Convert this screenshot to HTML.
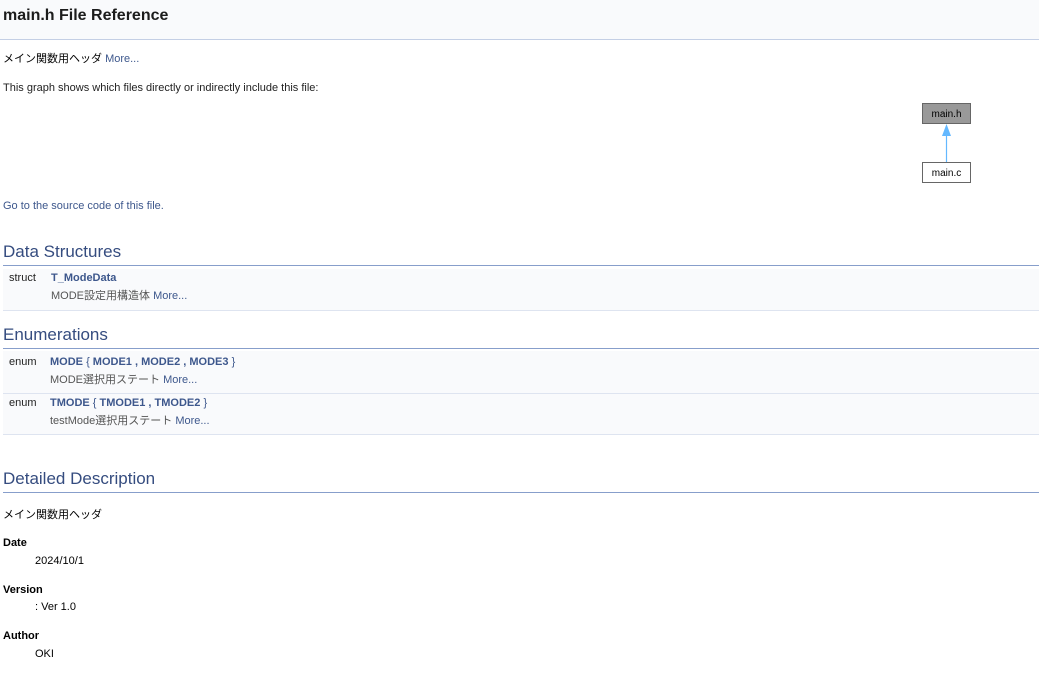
<!DOCTYPE html>
<html><head><meta charset="utf-8">
<style>
body{margin:0;width:1039px;height:690px;background:#fff;position:relative;overflow:hidden;font-family:"Liberation Sans","Noto Sans CJK JP",sans-serif;font-size:11px;color:#000;}
.a{position:absolute;white-space:nowrap;line-height:14px;}
.l{color:#3d578c;}
.b{font-weight:bold;}
.h2{position:absolute;left:3px;font-size:17px;color:#354c7f;line-height:20px;white-space:nowrap;}
.hl{position:absolute;left:3px;right:0;height:1px;background:#879ecb;}
.row{position:absolute;left:3px;right:0;background:#f9fafc;border-bottom:1px solid #dee4f0;}
</style></head><body>
<div style="position:absolute;left:0;top:0;width:1039px;height:39px;background:#f9fafc;border-bottom:1px solid #c4cfe5;"></div>
<div class="a b" style="left:3px;top:6px;font-size:16px;line-height:20px;color:#1c1c1c;">main.h File Reference</div>
<div class="a" style="left:3px;top:52px;">メイン関数用ヘッダ <span class="l">More...</span></div>
<div class="a" style="left:3px;top:81px;color:#222;">This graph shows which files directly or indirectly include this file:</div>
<svg style="position:absolute;left:0;top:0" width="1039" height="200">
<rect x="922.5" y="103.5" width="48" height="20" fill="#999" stroke="#666"/>
<text x="946.5" y="117" font-size="10" text-anchor="middle" font-family="Liberation Sans" fill="#000">main.h</text>
<rect x="922.5" y="162.5" width="48" height="20" fill="#fff" stroke="#666"/>
<text x="946.5" y="176" font-size="10" text-anchor="middle" font-family="Liberation Sans" fill="#000">main.c</text>
<line x1="946.5" y1="135" x2="946.5" y2="162" stroke="#63b8ff" stroke-width="1.2"/>
<polygon points="942,136 951,136 946.5,124" fill="#63b8ff"/>
</svg>
<div class="a l" style="left:3px;top:199px;">Go to the source code of this file.</div>

<div class="h2" style="top:242px;">Data Structures</div>
<div class="hl" style="top:265px;"></div>
<div class="row" style="top:269px;height:41px;"></div>
<div class="a" style="left:9px;top:271px;color:#222;">struct</div>
<div class="a b l" style="left:51px;top:271px;">T_ModeData</div>
<div class="a" style="left:51px;top:289px;color:#555;">MODE設定用構造体 <span class="l">More...</span></div>

<div class="h2" style="top:325px;">Enumerations</div>
<div class="hl" style="top:348px;"></div>
<div class="row" style="top:351px;height:42px;"></div>
<div class="row" style="top:394px;height:40px;"></div>
<div class="a" style="left:9px;top:355px;color:#222;">enum</div>
<div class="a b l" style="left:50px;top:355px;">MODE <span style="font-weight:normal">{</span> MODE1 , MODE2 , MODE3 <span style="font-weight:normal">}</span></div>
<div class="a" style="left:50px;top:373px;color:#555;">MODE選択用ステート <span class="l">More...</span></div>
<div class="a" style="left:9px;top:396px;color:#222;">enum</div>
<div class="a b l" style="left:50px;top:396px;">TMODE <span style="font-weight:normal">{</span> TMODE1 , TMODE2 <span style="font-weight:normal">}</span></div>
<div class="a" style="left:50px;top:414px;color:#555;">testMode選択用ステート <span class="l">More...</span></div>

<div class="h2" style="top:469px;">Detailed Description</div>
<div class="hl" style="top:492px;"></div>
<div class="a" style="left:3px;top:508px;">メイン関数用ヘッダ</div>
<div class="a b" style="left:3px;top:536px;">Date</div>
<div class="a" style="left:35px;top:554px;">2024/10/1</div>
<div class="a b" style="left:3px;top:583px;">Version</div>
<div class="a" style="left:35px;top:600px;">: Ver 1.0</div>
<div class="a b" style="left:3px;top:629px;">Author</div>
<div class="a" style="left:35px;top:647px;">OKI</div>
</body></html>
